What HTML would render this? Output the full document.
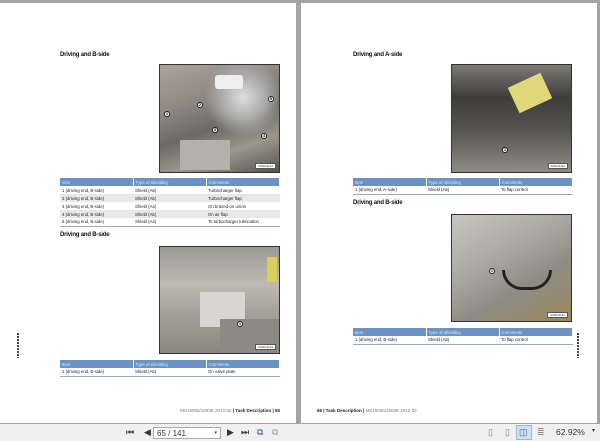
<!DOCTYPE html>
<html><head><meta charset="utf-8"><style>
*{margin:0;padding:0;box-sizing:border-box}
body{width:600px;height:441px;background:#a3a3a3;position:relative;overflow:hidden;font-family:"Liberation Sans",sans-serif}
.page{position:absolute;background:#fff;top:3px;height:420px}
.h{position:absolute;font-size:6px;font-weight:bold;color:#111;letter-spacing:-0.2px}
.img{position:absolute;border:1px solid #333;overflow:hidden}
.tag{position:absolute;right:3px;bottom:3px;background:#fff;border:1px solid #555;font-size:3px;padding:0 2px;height:6px;line-height:5px;color:#333}
.num{position:absolute;width:6px;height:6px;border-radius:50%;background:#fff;border:1px solid #222;font-size:4px;line-height:4px;text-align:center;font-weight:bold}
table{position:absolute;border-collapse:collapse;font-size:4.3px;color:#222}
th{background:#6a93c4;color:#dde8f5;font-weight:normal;text-align:left;height:8px;padding:0 2px;border-right:1px solid #fff}
td{height:8px;padding:0 2px}
tr.g td{background:#e8e8e8}
tr:last-child td{border-bottom:1px solid #9ab}
.foot{position:absolute;font-size:4.5px;color:#777;top:405px}
.foot b{color:#222}
.side{position:absolute;width:2px;height:25px;top:330px;background:repeating-linear-gradient(#444 0 2px,#fff 2px 3px)}
.tb{position:absolute;left:0;top:424px;width:600px;height:17px;background:#f0f0f0;font-size:9px;color:#333}
.tb span{position:absolute;top:3px}
</style></head><body>
<div class="page" style="left:0;width:296px">
 <div class="h" style="left:60px;top:49px">Driving and B-side</div>
 <div class="img" style="left:159px;top:61px;width:121px;height:109px;background:radial-gradient(circle at 70% 30%,#ddd 0,#aaa 20%,transparent 35%),linear-gradient(160deg,#a9a59c 0%,#8f8b83 30%,#6c6a66 55%,#9b978d 75%,#55534f 100%)">
  <div style="position:absolute;left:55px;top:10px;width:28px;height:14px;background:#eee;border-radius:3px"></div>
  <div style="position:absolute;left:20px;top:75px;width:50px;height:30px;background:#b4b1aa"></div>
  <div class="num" style="left:4px;top:46px">1</div><div class="num" style="left:37px;top:37px">2</div><div class="num" style="left:52px;top:62px">3</div><div class="num" style="left:101px;top:68px">4</div><div class="num" style="left:108px;top:31px">5</div>
  <div class="tag">00001114a</div></div>
 <table style="left:60px;top:175px;width:220px">
  <tr><th style="width:73px">Item</th><th style="width:73px">Type of shielding</th><th>Comments</th></tr>
  <tr><td>1 (driving end, B-side)</td><td>Shield (A5)</td><td>Turbocharger flap</td></tr>
  <tr class="g"><td>2 (driving end, B-side)</td><td>Shield (A5)</td><td>Turbocharger flap</td></tr>
  <tr><td>3 (driving end, B-side)</td><td>Shield (A4)</td><td>On brazed-on union</td></tr>
  <tr class="g"><td>4 (driving end, B-side)</td><td>Shield (A5)</td><td>On air flap</td></tr>
  <tr><td>5 (driving end, B-side)</td><td>Shield (A4)</td><td>To turbocharger lubrication</td></tr>
 </table>
 <div class="h" style="left:60px;top:229px">Driving and B-side</div>
 <div class="img" style="left:159px;top:243px;width:121px;height:108px;background:linear-gradient(180deg,#9c9a93 0%,#bdbab2 35%,#a6a39b 60%,#8a877f 100%)">
  <div style="position:absolute;left:40px;top:45px;width:45px;height:35px;background:#d8d6d1"></div>
  <div style="position:absolute;left:60px;top:72px;width:60px;height:36px;background:#8d8a83"></div>
  <div style="position:absolute;right:2px;top:10px;width:10px;height:25px;background:#d9cf5a"></div>
  <div class="num" style="left:77px;top:74px">1</div>
  <div class="tag">00001113a</div></div>
 <table style="left:60px;top:357px;width:220px">
  <tr><th style="width:73px">Item</th><th style="width:73px">Type of shielding</th><th>Comments</th></tr>
  <tr><td>1 (driving end, B-side)</td><td>Shield (A5)</td><td>On valve plate</td></tr>
 </table>
 <div class="foot" style="right:16px">MS15006/1003E 2012-02 <b>| Task Description | 65</b></div>
 <div class="side" style="left:17px"></div>
</div>
<div class="page" style="left:301px;width:296px">
 <div class="h" style="left:52px;top:49px">Driving and A-side</div>
 <div class="img" style="left:150px;top:61px;width:121px;height:109px;background:linear-gradient(180deg,#7c7a77 0%,#3e3d3b 30%,#55534f 60%,#8f8c86 100%)">
  <div style="position:absolute;left:60px;top:14px;width:36px;height:28px;background:#e0d77a;transform:rotate(-25deg)"></div>
  <div class="num" style="left:50px;top:82px">1</div>
  <div class="tag">00001111a</div></div>
 <table style="left:52px;top:175px;width:220px">
  <tr><th style="width:73px">Item</th><th style="width:73px">Type of shielding</th><th>Comments</th></tr>
  <tr><td>1 (driving end, A-side)</td><td>Shield (A5)</td><td>To flap control</td></tr>
 </table>
 <div class="h" style="left:52px;top:197px">Driving and B-side</div>
 <div class="img" style="left:150px;top:211px;width:121px;height:108px;background:linear-gradient(150deg,#c8c6c0 0%,#a9a7a1 40%,#8e8b84 65%,#9b8a5c 100%)">
  <div style="position:absolute;left:50px;top:55px;width:50px;height:20px;border:3px solid #222;border-top:none;border-radius:0 0 20px 20px"></div>
  <div class="num" style="left:37px;top:53px">1</div>
  <div class="tag">00001112a</div></div>
 <table style="left:52px;top:325px;width:220px">
  <tr><th style="width:73px">Item</th><th style="width:73px">Type of shielding</th><th>Comments</th></tr>
  <tr><td>1 (driving end, B-side)</td><td>Shield (A5)</td><td>To flap control</td></tr>
 </table>
 <div class="foot" style="left:16px"><b>66 | Task Description |</b> MS15006/1003E 2012-02</div>
 <div class="side" style="left:276px"></div>
</div>
<div class="tb">
 <span style="left:126px">⏮</span><span style="left:144px">◀</span>
 <div style="position:absolute;left:153px;top:3px;width:68px;height:12px;background:#fff;border:1px solid #aaa;font-size:8px;padding-left:3px;line-height:11px">65 / 141<span style="position:absolute;right:3px;top:0;font-size:5px">▾</span></div>
 <span style="left:227px">▶</span><span style="left:241px">⏭</span>
 <span style="left:257px;color:#357">⧉</span><span style="left:272px;color:#999">⧉</span>
 <span style="left:488px;color:#888">▯</span><span style="left:505px;color:#888">▯</span>
 <div style="position:absolute;left:516px;top:1px;width:16px;height:15px;background:#cfe0f3;border:1px solid #9bc"></div><span style="left:519px;color:#567">◫</span>
 <span style="left:537px;color:#888">≣</span>
 <span style="left:556px;font-size:8.5px">62.92%</span><span style="left:592px;font-size:6px">▾</span>
</div>
</body></html>
